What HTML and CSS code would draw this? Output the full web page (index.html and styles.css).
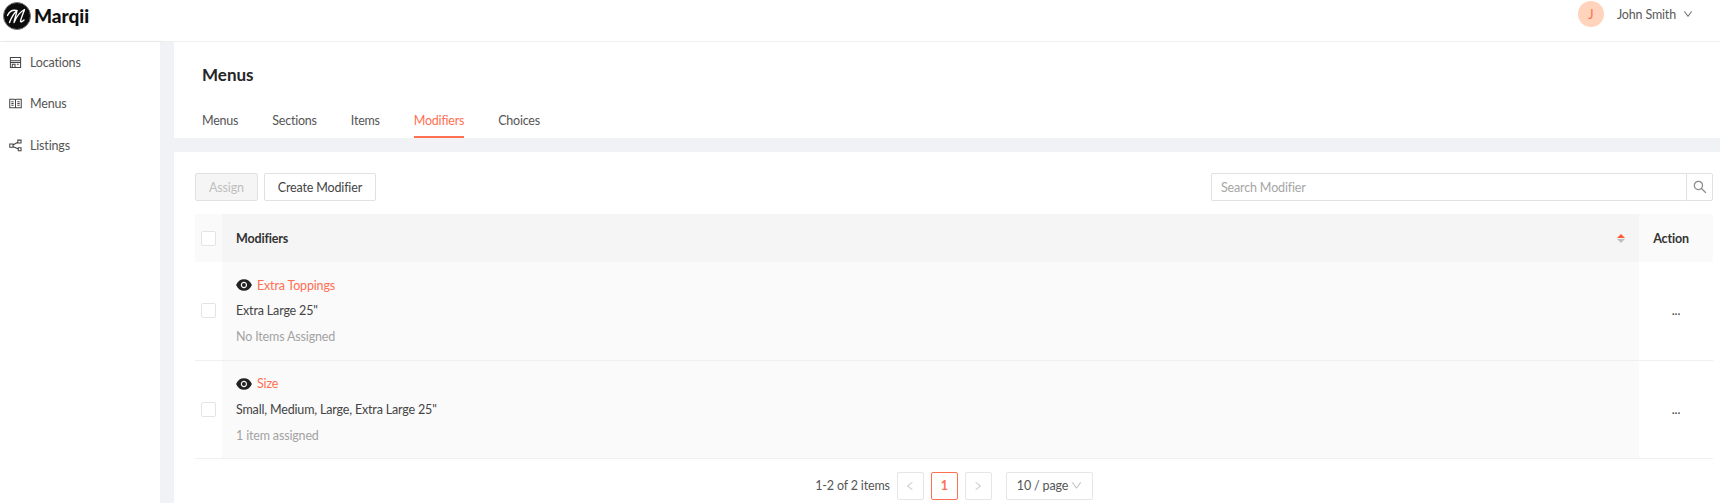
FILE: index.html
```html
<!DOCTYPE html>
<html lang="en">
<head>
    <meta charset="UTF-8">
    <meta name="viewport" content="width=device-width, initial-scale=1.0">
    <link rel="stylesheet" href="styles.css">
    <title>Menus - Marqii</title>
</head>
<body>
    <header class="topbar">
        <div class="brand">
            <svg class="brand-mark" viewBox="0 0 28 28">
                <circle cx="14" cy="14" r="13.5" fill="#0c0c0c" stroke="#777" stroke-width="1"/>
                <g fill="none" stroke="#fff" stroke-linecap="round" stroke-linejoin="round" stroke-width="1.400">
                    <path d="M4.500 13.500C6 10 9.500 7.800 13.500 8.500"/>
                    <path d="M6.500 20.500C8.500 15.500 11.500 10.500 14 8.500C13.200 13 11.500 17 11 20.500C13 15.500 17 10 21.500 7.500C20 12 18 16 17.500 19.500C18 20.500 19.500 19.500 21 18"/>
                </g>
            </svg>
            <span class="brand-name">Marqii</span>
        </div>
        <div class="user">
            <span class="avatar">J</span>
            <span class="user-name">John Smith</span>
            <svg class="chevron" viewBox="64 64 896 896"><path d="M884 256h-75c-5.100 0-9.900 2.500-12.900 6.600L512 654.200 227.900 262.600c-3-4.100-7.800-6.600-12.900-6.600h-75c-6.500 0-10.300 7.400-6.500 12.700l352.600 486.100c12.800 17.600 39 17.600 51.700 0l352.600-486.100c3.900-5.300.1-12.700-6.400-12.700z"/></svg>
        </div>
    </header>

    <div class="layout">
        <nav class="sidebar">
            <a class="side-item">
                <svg class="side-icon" viewBox="0 0 14 14"><path d="M1.500 1.500h11v11h-11zM1.500 5h11M1.500 7h11M3.500 12.500V9h3v3.500M8.500 9h2"/></svg>
                Locations
            </a>
            <a class="side-item">
                <svg class="side-icon" viewBox="0 0 14 14"><path d="M.8 2.500h5.400q1 0 .8 1q-.2-1 .8-1h5.400v9H8q-1 0-1 .5q0-.5-1-.5H.8zM7 3.500v8M2.500 5H5M2.500 7H5M2.500 9H5M9 5h2.500M9 7h2.500M9 9h2.500"/></svg>
                Menus
            </a>
            <a class="side-item">
                <svg class="side-icon" viewBox="0 0 14 14"><path d="M.8 5.500h3.500v3.500H.8zM9.500 1.200h3.500v3.200H9.500zM10 9.500h3v3.200h-3zM4.300 6.500L9.500 3.500M4.300 8L10 10.800"/></svg>
                Listings
            </a>
        </nav>

        <main class="content">
            <section class="page-head">
                <h1 class="page-title">Menus</h1>
                <div class="tabs">
                    <a class="tab">Menus</a>
                    <a class="tab">Sections</a>
                    <a class="tab">Items</a>
                    <a class="tab active">Modifiers</a>
                    <a class="tab">Choices</a>
                </div>
            </section>

            <section class="panel">
                <div class="toolbar">
                    <button class="btn" disabled>Assign</button>
                    <button class="btn">Create Modifier</button>
                    <div class="search">
                        <input class="search-input" type="text" placeholder="Search Modifier">
                        <span class="search-btn">
                            <svg viewBox="64 64 896 896"><path d="M909.600 854.500L649.900 594.800C690.200 542.700 712 479 712 412c0-80.200-31.300-155.400-87.900-212.100-56.600-56.700-132-87.900-212.100-87.900s-155.500 31.300-212.100 87.900C143.200 256.500 112 331.800 112 412c0 80.100 31.300 155.500 87.900 212.100C256.500 680.800 331.800 712 412 712c67 0 130.600-21.800 182.700-62l259.700 259.600a8.200 8.200 0 0 0 11.600 0l43.600-43.500a8.200 8.200 0 0 0 0-11.600zM570.400 570.400C528 612.700 471.800 636 412 636s-116-23.300-158.400-65.600C211.300 528 188 471.800 188 412s23.300-116.100 65.600-158.400C296 211.300 352.200 188 412 188s116.100 23.200 158.400 65.600S636 352.200 636 412s-23.300 116.100-65.600 158.400z"/></svg>
                        </span>
                    </div>
                </div>

                <table class="table">
                    <thead>
                        <tr>
                            <th class="col-check"><span class="checkbox"></span></th>
                            <th class="col-name sorted">
                                <div class="th-inner">
                                    Modifiers
                                    <span class="sorter"><i class="caret-up"></i><i class="caret-down"></i></span>
                                </div>
                            </th>
                            <th class="col-action">Action</th>
                        </tr>
                    </thead>
                    <tbody>
                        <tr>
                            <td class="col-check"><span class="checkbox"></span></td>
                            <td class="col-name sorted">
                                <div class="item-title">
                                    <svg class="eye" viewBox="64 64 896 896"><path d="M396 512a112 112 0 1 0 224 0 112 112 0 1 0-224 0zm546.200-25.800C847.400 286.500 704.100 186 512 186c-192.200 0-335.400 100.500-430.200 300.300a60.300 60.300 0 0 0 0 51.500C176.600 737.500 319.900 838 512 838c192.200 0 335.400-100.500 430.200-300.300 7.700-16.200 7.700-35 0-51.500zM508 688c-97.200 0-176-78.800-176-176s78.800-176 176-176 176 78.800 176 176-78.800 176-176 176z"/></svg>
                                    <a class="item-link">Extra Toppings</a>
                                </div>
                                <div class="item-line">Extra Large 25"</div>
                                <div class="item-note">No Items Assigned</div>
                            </td>
                            <td class="col-action">...</td>
                        </tr>
                        <tr>
                            <td class="col-check"><span class="checkbox"></span></td>
                            <td class="col-name sorted">
                                <div class="item-title">
                                    <svg class="eye" viewBox="64 64 896 896"><path d="M396 512a112 112 0 1 0 224 0 112 112 0 1 0-224 0zm546.200-25.800C847.400 286.500 704.100 186 512 186c-192.200 0-335.400 100.500-430.200 300.300a60.300 60.300 0 0 0 0 51.500C176.600 737.500 319.900 838 512 838c192.200 0 335.400-100.500 430.200-300.300 7.700-16.200 7.700-35 0-51.500zM508 688c-97.200 0-176-78.800-176-176s78.800-176 176-176 176 78.800 176 176-78.800 176-176 176z"/></svg>
                                    <a class="item-link">Size</a>
                                </div>
                                <div class="item-line">Small, Medium, Large, Extra Large 25"</div>
                                <div class="item-note">1 item assigned</div>
                            </td>
                            <td class="col-action">...</td>
                        </tr>
                    </tbody>
                </table>

                <div class="pagination">
                    <span class="page-total">1-2 of 2 items</span>
                    <span class="page-btn"><svg viewBox="64 64 896 896"><path transform="matrix(-1 0 0 1 1024 0)" d="M765.700 486.800L314.900 134.700A7.970 7.970 0 0 0 302 141v77.300c0 4.900 2.300 9.600 6.100 12.600l360 281.100-360 281.100c-3.900 3-6.100 7.700-6.100 12.600V883c0 6.700 7.700 10.400 12.900 6.300l450.800-352.100a31.960 31.960 0 0 0 0-50.400z"/></svg></span>
                    <span class="page-btn current">1</span>
                    <span class="page-btn"><svg viewBox="64 64 896 896"><path d="M765.700 486.800L314.900 134.700A7.970 7.970 0 0 0 302 141v77.300c0 4.900 2.300 9.600 6.100 12.600l360 281.100-360 281.100c-3.900 3-6.100 7.700-6.100 12.600V883c0 6.700 7.700 10.400 12.900 6.300l450.800-352.100a31.960 31.960 0 0 0 0-50.400z"/></svg></span>
                    <span class="page-size">
                        10 / page
                        <svg viewBox="64 64 896 896"><path d="M884 256h-75c-5.100 0-9.900 2.500-12.900 6.600L512 654.200 227.900 262.600c-3-4.100-7.800-6.600-12.900-6.600h-75c-6.500 0-10.300 7.400-6.500 12.700l352.600 486.100c12.800 17.600 39 17.600 51.700 0l352.600-486.100c3.900-5.300.1-12.700-6.400-12.700z"/></svg>
                    </span>
                </div>
            </section>
        </main>
    </div>
</body>
</html>
```

FILE: styles.css
```css
* {
    box-sizing: border-box;
}

html, body {
    height: 100%;
}

body {
    margin: 0;
    overflow: hidden;
    display: flex;
    flex-direction: column;
    background-color: #fff;
    color: #3d3d3d;
    font-family: "Lato", "Liberation Sans", sans-serif;
    font-size: 12.500px;
    letter-spacing: -0.16px;
}

/* top bar */
.topbar {
    height: 42px;
    flex: none;
    display: flex;
    align-items: flex-start;
    justify-content: space-between;
    border-bottom: 1px solid #efefef;
}

.brand {
    display: flex;
    align-items: center;
    height: 31px;
    padding-left: 3px;
    gap: 3px;
}

.brand-mark {
    width: 28px;
    height: 28px;
}

.brand-name {
    font-family: "Lato", sans-serif;
    font-weight: 900;
    font-size: 19px;
    letter-spacing: 0;
    color: #111;
}

.user {
    display: flex;
    align-items: center;
    height: 28px;
    margin-right: 27px;
    color: #595959;
}

.avatar {
    width: 26px;
    height: 26px;
    border-radius: 50%;
    background-color: #ffd3bc;
    color: #ff6f52;
    display: flex;
    align-items: center;
    justify-content: center;
    margin-right: 13px;
}

.chevron {
    width: 10px;
    height: 10px;
    margin-left: 7px;
    fill: #666;
}

/* left nav */
.layout {
    flex: 1;
    display: flex;
    min-height: 0;
}

.sidebar {
    width: 160px;
    flex: none;
    background-color: #fff;
    box-shadow: 2px 0 4px rgba(0, 0, 0, 0.06);
}

.side-item {
    height: 41.500px;
    padding: 0 0 1px 9px;
    display: flex;
    align-items: center;
    gap: 8px;
    color: #555;
}

.side-icon {
    width: 13px;
    height: 13px;
    fill: none;
    stroke: #444;
    stroke-width: 1.100;
}

/* main area */
.content {
    flex: 1;
    min-width: 0;
    padding-left: 14px;
    background-color: #f0f2f5;
}

.page-head {
    height: 96px;
    padding: 22px 28px 0;
    background-color: #fff;
}

.page-title {
    margin: 0;
    height: 22px;
    line-height: 22px;
    font-size: 17px;
    font-weight: 700;
    letter-spacing: 0;
    color: #262626;
}

.tabs {
    display: flex;
    gap: 34px;
    margin-top: 20px;
}

.tab {
    height: 32px;
    line-height: 30px;
    letter-spacing: -0.22px;
    color: #555;
}

.tab.active {
    color: #ff6f52;
    border-bottom: 2px solid #ff6f52;
}

.panel {
    height: 351px;
    margin-top: 14px;
    padding: 21px 7px 0 21px;
    background-color: #fff;
}

.toolbar {
    display: flex;
    align-items: center;
    gap: 6px;
    margin-bottom: 13px;
}

.btn {
    height: 28px;
    padding: 0 13px;
    border: 1px solid #e1e1e1;
    border-radius: 2px;
    background-color: #fff;
    color: #444;
    font: inherit;
    letter-spacing: inherit;
}

.btn:disabled {
    background-color: #f5f5f5;
    color: #bfbfbf;
}

.search {
    margin-left: auto;
    width: 502px;
    height: 28px;
    display: flex;
}

.search-input {
    flex: 1;
    min-width: 0;
    padding: 0 9px;
    border: 1px solid #e1e1e1;
    border-right: 0;
    border-radius: 2px 0 0 2px;
    font: inherit;
    letter-spacing: inherit;
    outline: none;
}

.search-input::placeholder {
    color: #a6a6a6;
}

.search-btn {
    width: 27px;
    border: 1px solid #e1e1e1;
    border-radius: 0 2px 2px 0;
    display: flex;
    align-items: center;
    justify-content: center;
}

.search-btn svg {
    width: 14px;
    height: 14px;
    fill: #8c8c8c;
}

/* table */
.table {
    width: 100%;
    border-collapse: collapse;
    table-layout: fixed;
}

.table th {
    height: 48px;
    background-color: #fafafa;
    font-weight: 700;
    color: #333;
    text-align: left;
}

.table td {
    height: 98px;
    border-bottom: 1px solid #f0f0f0;
}

.col-check {
    width: 27px;
    text-align: center;
    padding: 0;
}

.col-name {
    padding: 0 14px;
}

.table td.col-name {
    padding-top: 1px;
}

.col-action {
    width: 74px;
    padding: 0;
}

.table .col-action {
    text-align: center;
}

.table th.col-action {
    padding-right: 10px;
}

.table th.sorted {
    background-color: #f5f5f5;
}

.table td.sorted {
    background-color: #fafafa;
}

.checkbox {
    display: block;
    width: 15px;
    height: 15px;
    margin-left: 6px;
    background-color: #fff;
    border: 1px solid #e4e4e4;
    border-radius: 2px;
}

.th-inner {
    display: flex;
    align-items: center;
    justify-content: space-between;
}

.sorter {
    display: flex;
    flex-direction: column;
    gap: 1px;
}

.caret-up {
    border: 4px solid transparent;
    border-top: 0;
    border-bottom: 4px solid #ff5a36;
}

.caret-down {
    border: 4px solid transparent;
    border-bottom: 0;
    border-top: 4px solid #bfbfbf;
}

.item-title {
    display: flex;
    align-items: center;
    gap: 5px;
    height: 24px;
}

.eye {
    width: 16px;
    height: 16px;
    fill: #222;
}

.item-link {
    color: #ff6f52;
}

.item-line {
    margin-top: 2px;
    height: 24px;
    line-height: 24px;
    color: #444;
}

.item-note {
    margin-top: 2px;
    height: 24px;
    line-height: 24px;
    color: #a3a3a3;
}

/* pager */
.pagination {
    display: flex;
    align-items: center;
    justify-content: center;
    gap: 7px;
    margin-top: 13px;
    color: #555;
}

.page-btn {
    width: 27px;
    height: 28px;
    border: 1px solid #e6e6e6;
    border-radius: 2px;
    display: flex;
    align-items: center;
    justify-content: center;
}

.page-btn svg {
    width: 10px;
    height: 10px;
    fill: #c4c4c4;
}

.page-btn.current {
    border-color: #ff6f52;
    color: #ff6f52;
    font-weight: 700;
}

.page-size {
    width: 87px;
    height: 28px;
    margin-left: 7px;
    padding: 0 10px;
    border: 1px solid #e6e6e6;
    border-radius: 2px;
    display: flex;
    align-items: center;
    justify-content: space-between;
    white-space: nowrap;
}

.page-size svg {
    width: 11px;
    height: 11px;
    fill: #bfbfbf;
}
```
